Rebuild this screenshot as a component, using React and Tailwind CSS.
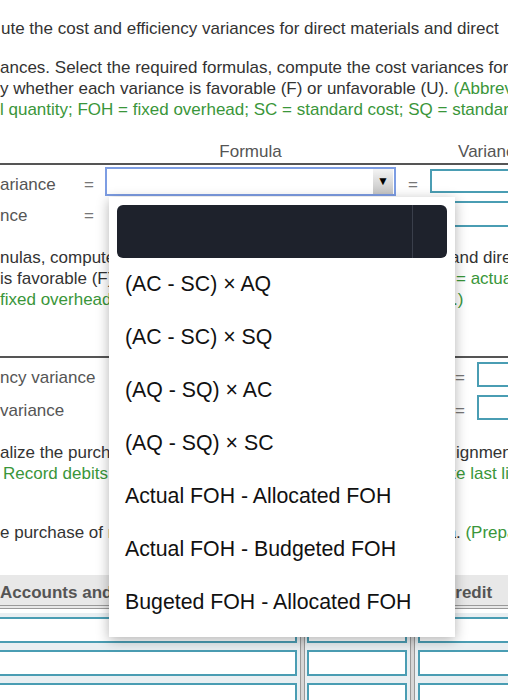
import React from "react";

const options = [
  "(AC - SC) × AQ",
  "(AC - SC) × SQ",
  "(AQ - SQ) × AC",
  "(AQ - SQ) × SC",
  "Actual FOH - Allocated FOH",
  "Actual FOH - Budgeted FOH",
  "Bugeted FOH - Allocated FOH",
];

function SplitLine({ left, right, leftClass = "", rightClass = "", leftWidth }) {
  return (
    <div className="flex whitespace-nowrap">
      <span className={`shrink-0 overflow-hidden ${leftWidth} ${leftClass}`}>{left}</span>
      <span className={`shrink-0 ${rightClass}`}>{right}</span>
    </div>
  );
}

export default function App() {
  return (
    <div className="relative h-[700px] w-[508px] overflow-hidden bg-white font-['Liberation_Sans',Arial,sans-serif] text-[17px] leading-[21px] text-[#333]">
      {/* intro */}
      <div className="whitespace-nowrap">
        <p className="pl-[1px] pt-[18px]">
          ute the cost and efficiency variances for direct materials and direct
        </p>
        <div className="mt-[18px]">
          <p>ances. Select the required formulas, compute the cost variances for</p>
          <p>
            y whether each variance is favorable (F) or unfavorable (U).{" "}
            <span className="text-[#3a963a]">(Abbreviations used:</span>
          </p>
          <p className="text-[#3a963a]">
            l quantity; FOH = fixed overhead; SC = standard cost; SQ = standard quantity.)
          </p>
        </div>
      </div>

      {/* formula table 1 */}
      <div className="mt-[21px]">
        <div className="flex h-[24px] whitespace-nowrap border-b-2 border-[#555] text-[#555]">
          <div className="w-[105px] shrink-0" />
          <div className="w-[291px] shrink-0 text-center">Formula</div>
          <div className="w-[34px] shrink-0" />
          <div className="w-[122px] shrink-0 text-center">Variance</div>
        </div>

        <div className="flex h-[32px] items-center whitespace-nowrap">
          <div className="mt-[6px] w-[80px] shrink-0 text-[#555]">ariance</div>
          <div className="mt-[6px] w-[18px] shrink-0 text-center text-[#777]">=</div>
          <div className="w-[7px] shrink-0" />
          <div className="flex h-[29px] w-[291px] shrink-0 justify-end border-2 border-[#7d9de3] bg-white">
            <div className="mr-[1px] flex w-[20px] items-center justify-center bg-gradient-to-b from-[#f4f4f4] to-[#c4c4c4] text-[12px] text-black">
              ▼
            </div>
          </div>
          <div className="mt-[6px] w-[34px] shrink-0 text-center text-[#777]">=</div>
          <div className="h-[24px] w-[122px] shrink-0 border-2 border-[#4a9db3]" />
        </div>

        <div className="flex h-[34px] items-center whitespace-nowrap">
          <div className="mt-[3px] w-[80px] shrink-0 text-[#555]">nce</div>
          <div className="mt-[3px] w-[18px] shrink-0 text-center text-[#777]">=</div>
          <div className="w-[332px] shrink-0" />
          <div className="h-[26px] w-[122px] shrink-0 border-2 border-[#4a9db3]" />
        </div>
      </div>

      {/* part 2 instructions */}
      <div className="mt-[16px]">
        <SplitLine
          leftWidth="w-[450px]"
          left="nulas, compute the cost variances for direct materials a"
          right="and direct labor"
        />
        <SplitLine
          leftWidth="w-[456px]"
          left="is favorable (F) or unfavorable (U). (Abbreviations used: AC"
          right="= actual cost"
          rightClass="text-[#3a963a]"
        />
        <SplitLine
          leftWidth="w-[453px]"
          left="fixed overhead; SC = standard cost; SQ = standard quantity"
          leftClass="text-[#3a963a]"
          right=".)"
          rightClass="text-[#3a963a]"
        />
      </div>

      {/* formula table 2 */}
      <div className="mt-[46px] h-[2px] bg-[#555]" />
      <div className="flex h-[33px] items-center whitespace-nowrap">
        <div className="mt-[5px] w-[448px] shrink-0 text-[#555]">ncy variance</div>
        <div className="mt-[5px] w-[24px] shrink-0 text-center text-[#777]">=</div>
        <div className="w-[5px] shrink-0" />
        <div className="h-[25px] w-[100px] shrink-0 border-2 border-[#4a9db3]" />
      </div>
      <div className="flex h-[33px] items-center whitespace-nowrap">
        <div className="mt-[5px] w-[448px] shrink-0 text-[#555]">variance</div>
        <div className="mt-[5px] w-[24px] shrink-0 text-center text-[#777]">=</div>
        <div className="w-[5px] shrink-0" />
        <div className="h-[25px] w-[100px] shrink-0 border-2 border-[#4a9db3]" />
      </div>

      {/* part 3 instructions */}
      <div className="mt-[18px]">
        <SplitLine
          leftWidth="w-[456px]"
          left="alize the purchase of materials and the assignment of"
          right="ignment"
        />
        <SplitLine
          leftWidth="w-[456px]"
          left=" Record debits first, then credits. Exclude explanations from th"
          leftClass="pl-[3px] text-[#3a963a]"
          right="e last line"
          rightClass="text-[#3a963a]"
        />
      </div>
      <div className="mt-[38px]">
        <SplitLine
          leftWidth="w-[456px]"
          left="e purchase of materials and the assignment of direct material"
          right={
            <>
              . <span className="text-[#3a963a]">(Prepare</span>
            </>
          }
        />
      </div>

      {/* journal table */}
      <div className="mt-[32px] flex h-[34px] items-center whitespace-nowrap border-b-[4px] border-double border-[#999] bg-[#e8e8e8] pt-[5px] font-bold text-[#555]">
        <div className="w-[443px] shrink-0 overflow-hidden">Accounts and Explanations</div>
        <div className="shrink-0">Credit</div>
      </div>
      <div className="mt-[4px]">
        {[0, 1, 2].map((row) => (
          <div key={row} className="flex h-[33px] bg-[#e9eff2]">
            <div className="-ml-[4px] mb-[3px] mt-[4px] h-[26px] w-[301px] shrink-0 border-2 border-[#4a9db3] bg-white" />
            <div className="flex w-[10px] shrink-0 justify-center">
              <div className="w-[5px] border-x border-[#999] bg-[#d6d6d6]" />
            </div>
            <div className="mb-[3px] mt-[4px] h-[26px] w-[100px] shrink-0 border-2 border-[#4a9db3] bg-white" />
            <div className="flex w-[11px] shrink-0 justify-center">
              <div className="w-[5px] border-x border-[#999] bg-[#d6d6d6]" />
            </div>
            <div className="mb-[3px] mt-[4px] h-[26px] w-[100px] shrink-0 border-2 border-[#4a9db3] bg-white" />
          </div>
        ))}
      </div>

      {/* open dropdown */}
      <div className="absolute left-[109px] top-[197px] h-[440px] w-[346px] bg-white shadow-[0_3px_12px_rgba(0,0,0,0.3)]">
        <div className="mx-[8px] mt-[8px] flex h-[53px] rounded-[6px] bg-[#1e222c]">
          <div className="w-[296px] border-r border-[#3a3f4b]" />
        </div>
        <ul className="mt-[-1px] whitespace-nowrap pl-[16px] text-[21.3px] leading-[24px] text-[#111]">
          {options.map((opt) => (
            <li key={opt} className="flex h-[53px] items-center">
              {opt}
            </li>
          ))}
        </ul>
      </div>
    </div>
  );
}
